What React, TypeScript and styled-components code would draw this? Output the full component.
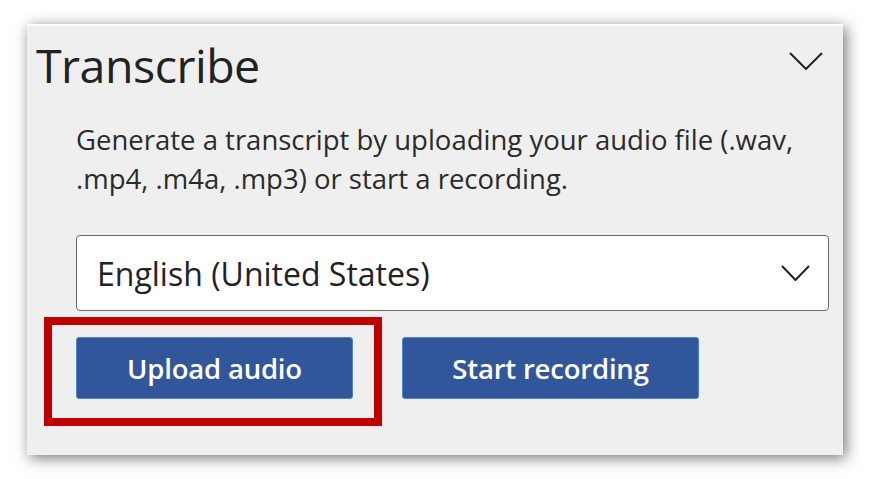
import React from "react";
import styled, { createGlobalStyle } from "styled-components";

const GlobalStyle = createGlobalStyle`
  html, body {
    margin: 0;
    padding: 0;
    background: #ffffff;
  }
  body {
    font-family: "Open Sans", "Noto Sans", sans-serif;
  }
`;

const Page = styled.div`
  width: 870px;
  height: 479px;
  padding: 24px 0 0 27px;
  box-sizing: border-box;
  overflow: hidden;
`;

const Panel = styled.section`
  width: 816px;
  height: 431px;
  box-sizing: border-box;
  background: #efefef;
  border-top: 2px solid #ffffff;
  box-shadow: 3px 3px 14px rgba(0, 0, 0, 0.55);
  display: flex;
  flex-direction: column;
`;

const Header = styled.header`
  display: flex;
  justify-content: space-between;
  align-items: flex-start;
  padding: 0 20px 0 9px;
`;

const Title = styled.h1`
  margin: 9px 0 0;
  font-weight: 400;
  font-size: 46.5px;
  line-height: 60px;
  color: #222222;
  letter-spacing: -0.5px;
`;

const Body = styled.div`
  padding: 0 0 0 49px;
  display: flex;
  flex-direction: column;
`;

const Description = styled.p`
  margin: 25px 0 0;
  font-size: 27.5px;
  line-height: 39px;
  color: #2b2b2b;
  width: 740px;
`;

const Select = styled.div`
  margin-top: 37px;
  width: 753px;
  height: 76px;
  box-sizing: border-box;
  background: #ffffff;
  border: 1.5px solid #6b6b6b;
  border-radius: 4px;
  display: flex;
  align-items: center;
  justify-content: space-between;
  padding: 0 18px 0 20px;
  font-size: 32px;
  color: #222222;
`;

const ButtonRow = styled.div`
  position: relative;
  margin-top: 26px;
  display: flex;
  gap: 49px;
`;

const Highlight = styled.div`
  position: absolute;
  left: -32px;
  top: -20px;
  width: 338px;
  height: 109px;
  box-sizing: border-box;
  border: 8px solid #c00000;
  pointer-events: none;
`;

const Button = styled.button<{ $width: number }>`
  width: ${(p) => p.$width}px;
  height: 62px;
  box-sizing: border-box;
  background: #32569a;
  border: 1px solid #4a84d8;
  border-radius: 3px;
  color: #ffffff;
  font-family: "Open Sans", "Noto Sans", sans-serif;
  font-weight: 600;
  font-size: 27.5px;
  letter-spacing: -0.2px;
  padding: 0;
  cursor: pointer;
`;

const Chevron: React.FC<{ w: number; h: number }> = ({ w, h }) => (
  <svg width={w} height={h} viewBox={`0 0 ${w} ${h}`} fill="none">
    <polyline
      points={`1,1 ${w / 2},${h - 1} ${w - 1},1`}
      stroke="#222"
      strokeWidth="2"
    />
  </svg>
);

const HeaderChevron = styled.div`
  margin-top: 26px;
  display: flex;
`;

const App: React.FC = () => (
  <Page>
    <GlobalStyle />
    <Panel>
      <Header>
        <Title>Transcribe</Title>
        <HeaderChevron>
          <Chevron w={34} h={18} />
        </HeaderChevron>
      </Header>
      <Body>
        <Description>
          Generate a transcript by uploading your audio file (.wav,
          <br />
          .mp4, .m4a, .mp3) or start a recording.
        </Description>
        <Select>
          <span>English (United States)</span>
          <Chevron w={29} h={16} />
        </Select>
        <ButtonRow>
          <Highlight />
          <Button $width={277}>Upload audio</Button>
          <Button $width={297}>Start recording</Button>
        </ButtonRow>
      </Body>
    </Panel>
  </Page>
);

export default App;
